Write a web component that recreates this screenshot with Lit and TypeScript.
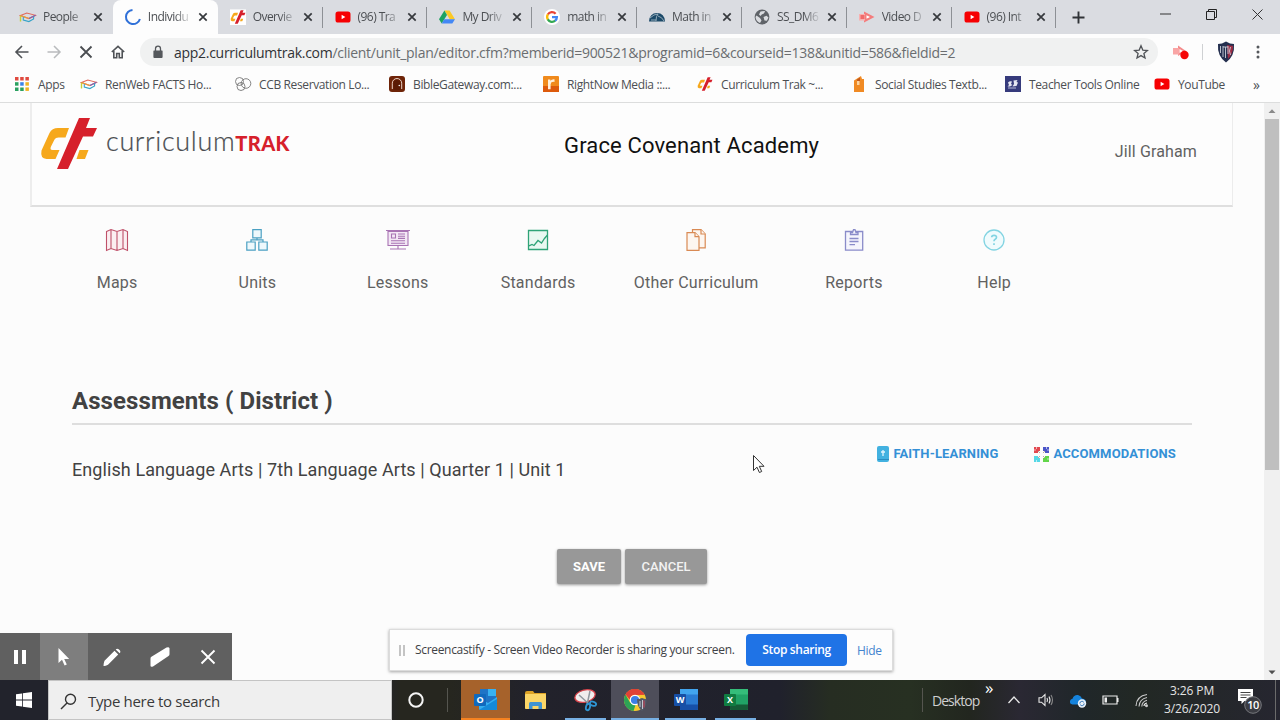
import { LitElement, html, css, svg } from "lit";
import { customElement } from "lit/decorators.js";

const youtube = svg`<svg width="16" height="16" viewBox="0 0 16 16"><rect x="0.5" y="2.5" width="15" height="11" rx="2.6" fill="#f60002"/><path d="M6.6 5.7 10.4 8 6.6 10.3z" fill="#fff"/></svg>`;
const facts = svg`<svg width="18" height="16" viewBox="0 0 18 16" fill="none" stroke-width="1.1"><path d="M1.500 6.600 7.800 4l8.700 2.300-6.600 3.300z" stroke="#e0685a"/><path d="M9.900 9.600 16.500 6.300" stroke="#7a63b8"/><path d="M1.500 6.600 9.900 9.600" stroke="#e9a13a"/><path d="M4.300 8v3l5.600 1.600 4.700-2.600V7.600" stroke="#35a3c8"/><path d="M1.500 7v5.500" stroke="#c7cf3a" stroke-width="1.400"/></svg>`;
const ctMark = svg`<g><path d="M29 10H18q-6 0-8.500 5l-8 17.500q-1.500 8 5 8.500h9l4-9h-7q-3 0-1.500-3.500l3.500-7q1-2 4-2h7z" fill="#f6a81c"/><path d="M36.500 41 39.500 32h9L45 41z" fill="#f6a81c"/><path d="M39 0h11l-4 10h11l-4 8.500H43L28 51H17z" fill="#d6202b"/></g>`;
const ct = svg`<svg width="16" height="16" viewBox="-1 -2 60 55">${ctMark}</svg>`;
const ctTab = svg`<svg width="16" height="16" viewBox="-1 -2 60 55"><rect x="-2" y="-3" width="62" height="60" fill="#fff"/>${ctMark}</svg>`;
const screencast = svg`<svg width="18" height="16" viewBox="0 0 18 16"><path d="M6 2.500 16.500 8 6 13.500z" fill="#f47c7c"/><path d="M8.500 6.200 12 8l-3.500 1.800z" fill="#fff"/><rect x="1" y="5" width="6" height="6.500" fill="#f9b0b0"/><rect x="2.500" y="6" width="4" height="4" fill="#f06a6a"/></svg>`;

const spinner = svg`<svg width="18" height="18" viewBox="0 0 18 18"><path d="M8.500 1.900A7.100 7.100 0 1 0 15.900 11" fill="none" stroke="#2f70d8" stroke-width="2"/></svg>`;
const drive = svg`<svg width="16" height="16" viewBox="0 0 16 16"><path d="M5.400 1.500h5.200L16 10.300h-5.200z" fill="#fbc926"/><path d="M5.400 1.500 8 6 2.700 14.500 0 10.300z" fill="#1ea362"/><path d="M5.300 10.300H16l-2.700 4.200H2.700z" fill="#4387f5"/></svg>`;
const google = svg`<svg width="16" height="16" viewBox="0 0 16 16"><circle cx="8" cy="8" r="8" fill="#fff"/><g fill="none" stroke-width="2.300"><path d="M3.800 5.500A4.900 4.900 0 0 1 11.600 4.700" stroke="#ea4335"/><path d="M3.900 10.600a4.900 4.900 0 0 1 0-5.200" stroke="#fbbc05"/><path d="M11.200 11.700a4.900 4.900 0 0 1-7.400-1.300" stroke="#34a853"/><path d="M8 8.100h4.900q0 2.400-1.800 3.700" stroke="#4285f4"/></g></svg>`;
const dome = svg`<svg width="16" height="16" viewBox="0 0 16 16"><path d="M0 12.500Q.5 4 8 4t8 8.500z" fill="#1c4a69"/><path d="M1 9q4-4 8-4-2 2-2 7M9 7q4 1 6 5M2 11h5" fill="none" stroke="#9fb4c2" stroke-width=".9"/></svg>`;
const globe = svg`<svg width="16" height="16" viewBox="0 0 16 16"><circle cx="8" cy="8" r="7.400" fill="#5f6368"/><path d="M2.500 6.500 6 9l1.500 2.500L6 14q-4-1.500-4.500-6zM6.500 2.500 11 2q-.5 3-3 3.200L6.500 7 5 5.500zM9.500 8l3-1.200 2 1.700-1.600 3.300-2.400-.4z" fill="#dadce0"/></svg>`;

const tabs: { icon: unknown; text: string; active?: boolean }[] = [
  { icon: facts, text: "People" },
  { icon: spinner, text: "Individu", active: true },
  { icon: ctTab, text: "Overvie" },
  { icon: youtube, text: "(96) Tra" },
  { icon: drive, text: "My Driv" },
  { icon: google, text: "math in" },
  { icon: dome, text: "Math in" },
  { icon: globe, text: "SS_DM6" },
  { icon: screencast, text: "Video D" },
  { icon: youtube, text: "(96) Int" },
];

const appsIcon = svg`<svg width="14" height="14" viewBox="0 0 14 14"><g fill="#e04a3f"><path d="M0 0h3.500v3.500H0zM5.200 0h3.500v3.500H5.200z"/><path d="M10.400 0h3.500v3.500h-3.500z"/></g><path d="M0 5.200h3.500v3.500H0z" fill="#2ba160"/><path d="M5.200 5.200h3.500v3.500H5.200z" fill="#3b83e8"/><path d="M10.400 5.200h3.500v3.500h-3.500z" fill="#f0b323"/><path d="M0 10.400h3.500v3.500H0zM5.200 10.400h3.500v3.500H5.200z" fill="#2ba160"/><path d="M10.400 10.400h3.500v3.500h-3.500z" fill="#f0b323"/></svg>`;
const ccb = svg`<svg width="18" height="16" viewBox="0 0 18 16" fill="none" stroke="#777" stroke-width=".9"><circle cx="5.500" cy="5.500" r="4"/><circle cx="7" cy="10.500" r="4"/><circle cx="12" cy="7.500" r="4.800"/></svg>`;
const bible = svg`<svg width="16" height="16" viewBox="0 0 16 16"><rect width="16" height="16" rx="3" fill="#6e2408"/><path d="M3.300 13V7.200a4.700 4.700 0 0 1 9.400 0V13" fill="none" stroke="#f3e3da" stroke-width=".9"/><path d="M4.500 14V7.500a3.500 3.500 0 0 1 7 0V14z" fill="#5a1b05"/><circle cx="10.300" cy="9.500" r=".8" fill="#fff"/></svg>`;
const rightnow = svg`<svg width="16" height="16" viewBox="0 0 16 16"><rect width="16" height="16" rx="1" fill="#f08a1c"/><path d="M0 10h16v6H0z" fill="#dd5a0c"/><path d="M5 3.500h2.300v1.300Q8.600 3 11.500 3.300v2.600q-3.700-.5-3.900 2.300v5H5z" fill="#fff0dc"/></svg>`;
const book = svg`<svg width="12" height="16" viewBox="0 0 12 16"><path d="M1 4.500 8 0l1 3h2v13H1z" fill="#f08a24"/><path d="M4 3.500 7 1.500v3.500H4z" fill="#c25a1e"/><path d="M4 5h2.500v4H4z" fill="#fbd3a0"/></svg>`;
const teacher = svg`<svg width="16" height="16" viewBox="0 0 16 16"><rect width="16" height="16" fill="#363b7c"/><path d="M3 6.500q2-2 4-1L6 8l1.500 1L5 10.500H2.500L4 9zM8.500 4.500l4-.5-1 2 1.500.5-1.500 3.500-4 .5L9 8z" fill="#e6e7f2"/><path d="M3 12h8" stroke="#b9bcd9"/></svg>`;

const bookmarks = [
  { icon: appsIcon, text: "Apps", cls: "b0" },
  { icon: facts, text: "RenWeb FACTS Ho...", cls: "b1" },
  { icon: ccb, text: "CCB Reservation Lo...", cls: "b2" },
  { icon: bible, text: "BibleGateway.com:...", cls: "b3" },
  { icon: rightnow, text: "RightNow Media ::...", cls: "b4" },
  { icon: ct, text: "Curriculum Trak ~...", cls: "b5" },
  { icon: book, text: "Social Studies Textb...", cls: "b6" },
  { icon: teacher, text: "Teacher Tools Online", cls: "b7" },
  { icon: youtube, text: "YouTube", cls: "b8" },
];

const closeX = svg`<svg width="10" height="10" viewBox="0 0 10 10"><path d="M1.300 1.300l7.400 7.400M8.700 1.300 1.300 8.700" stroke="#36393d" stroke-width="1.700"/></svg>`;

const navItems = [
  { text: "Maps", cls: "n0", icon: svg`<svg width="24" height="24" viewBox="0 0 24 24" fill="#fbeef1" stroke="#bf5069" stroke-width="1.100"><path d="M1.500 3.500 6 1.500l6 2 6-2 4.500 2v19l-4.500-2-6 2-6-2-4.500 2zM6 1.500v19M12 3.500v19M18 1.500v19"/></svg>` },
  { text: "Units", cls: "n1", icon: svg`<svg width="24" height="24" viewBox="0 0 24 24" fill="#eef8fc" stroke="#4ba0c2" stroke-width="1.200"><path d="M7.800 1.600h8.400v8.200H7.800zM1.800 14h8.400v8.200H1.800zM13.800 14h8.400v8.200h-8.400z"/><path d="M12 10v2M6 14v-2.200h12V14" fill="none"/></svg>` },
  { text: "Lessons", cls: "n2", icon: svg`<svg width="26" height="24" viewBox="0 0 26 24" fill="none" stroke="#a873b3" stroke-width="1.100"><path d="M3 3.500h20v14H3z" fill="#f3e7f5"/><path d="M1 2.500h24M13 17.500v3M5 21h16M6.500 6h4v4h-4zM13 6h7M13 8.200h7M13 10.400h7M6 12.800h14M6 15.200h14"/></svg>` },
  { text: "Standards", cls: "n3", icon: svg`<svg width="24" height="24" viewBox="0 0 24 24" fill="#e9f8f1" stroke="#2fa377" stroke-width="1.300"><path d="M2.500 2.500h19v19h-19z"/><path d="m3 17.800 3-1.300 2 1 4-5 3.500 2.500 3-4.500 3-3.500" fill="none"/></svg>` },
  { text: "Other Curriculum", cls: "n4", icon: svg`<svg width="24" height="24" viewBox="0 0 24 24" fill="#fdf6f0" stroke="#d98a54" stroke-width="1.200"><path d="M8.500 5V1.700H17l4.200 4.200v14H15"/><path d="M17 1.700V6h4.200"/><path d="M3 4.700h8l4 4v13.600H3z"/><path d="M11 4.700v4h4"/></svg>` },
  { text: "Reports", cls: "n5", icon: svg`<svg width="24" height="24" viewBox="0 0 24 24" fill="#f5f5fc" stroke="#8a8cc9" stroke-width="1.300"><path d="M3.500 3.500h17.200v18.700H3.500z"/><path d="M8.500 6.500V4.500h2l1-2.800h1.500l1 2.800h2v2zM7.500 10.500h9M7.500 13.500h9M7.500 16.700h5.500"/></svg>` },
  { text: "Help", cls: "n6", icon: svg`<svg width="24" height="24" viewBox="0 0 24 24" fill="none" stroke="#83d4e2" stroke-width="1.300"><circle cx="12" cy="12" r="10" fill="#f0fbfd"/><path d="M9.700 9.300q0-2 2.400-2t2.400 2q0 1.300-1.300 2t-1.200 2" stroke-width="1.700"/><path d="M12 15.300v1.700" stroke-width="1.700"/></svg>` },
];

@customElement("browser-chrome")
class BrowserChrome extends LitElement {
  static styles = css`
    :host { display: block; height: 103px; flex: none; background: #fdfdfd; font-family: "Open Sans", "Noto Sans", sans-serif; color: #4c4f53; }
    .tabs { height: 34px; background: #dadce1; display: flex; padding-left: 8px; box-sizing: border-box; }
    .tab { width: 104.85px; flex: none; display: flex; align-items: center; box-sizing: border-box; padding: 0 9px 0 11px; border-right: 1px solid transparent; background-clip: padding-box; }
    .tab.sep { border-image: linear-gradient(transparent 8px, #8d9095 8px, #8d9095 27px, transparent 27px) 1; border-width: 0 1px 0 0; border-style: solid; }
    .tab.active { background: #fdfdfd; border-radius: 8px 8px 0 0; border: 0; padding-right: 10px; }
    .ico { width: 18px; height: 18px; display: flex; align-items: center; justify-content: center; flex: none; }
    .label { width: 46px; margin: 0 -4px 0 6px; flex: none; white-space: nowrap; font-size: 12px; letter-spacing: -0.55px; line-height: 20px; -webkit-mask-image: linear-gradient(90deg, #000 58%, transparent 96%); }
    .close { margin-left: auto; display: flex; }
    .tabs-end { flex: 1; display: flex; align-items: center; }
    .plus { margin-left: 16px; display: flex; }
    .win { margin-left: auto; display: flex; gap: 35px; margin-right: 17px; margin-top: -5px; }
    .toolbar { height: 36px; display: flex; align-items: center; }
    .tools { display: flex; gap: 16px; padding-left: 14px; width: 126px; flex: none; }
    .omni { width: 1018px; height: 28px; border-radius: 14px; background: #f0f1f1; display: flex; align-items: center; padding: 0 9px 0 12px; box-sizing: border-box; }
    .url { margin-left: 10px; font-size: 14px; letter-spacing: -0.28px; color: #6a6d70; flex: 1; white-space: nowrap; }
    .url b { font-weight: 400; color: #303336; }
    .ext { display: flex; align-items: center; padding-left: 14px; }
    .vline { width: 1px; height: 16px; background: #cfd1d3; margin: 0 14px 0 12px; }
    .dots { margin-left: 15px; display: flex; }
    .marks { height: 33px; box-sizing: border-box; border-bottom: 1px solid #dcdddd; display: flex; align-items: center; padding: 0 0 4px 13px; font-size: 12px; letter-spacing: -0.37px; }
    .mark { display: flex; align-items: center; white-space: nowrap; flex: none; gap: 7px; }
    .b0 { width: 67px; } .b1 { width: 154px; } .b2 { width: 154px; } .b3 { width: 154px; } .b4 { width: 154px; } .b5 { width: 154px; } .b6 { width: 154px; } .b7 { width: 149px; } .b8 { width: 92px; }
    .more { margin-left: 8px; font-size: 14px; }
  `;
  render() {
    return html`
      <div class="tabs">
        ${tabs.map((t, i) => html`<div class="tab ${t.active ? "active" : ""} ${i > 1 ? "sep" : ""}">
          <span class="ico">${t.icon}</span><span class="label">${t.text}</span><span class="close">${closeX}</span></div>`)}
        <div class="tabs-end">
          <span class="plus"><svg width="13" height="13" viewBox="0 0 13 13"><path d="M6.500.5v12M.5 6.500h12" stroke="#303337" stroke-width="1.900"/></svg></span>
          <span class="win">
            <svg width="11" height="11" viewBox="0 0 11 11"><path d="M0 5h11" stroke="#333"/></svg>
            <svg width="11" height="11" viewBox="0 0 11 11" fill="none" stroke="#222"><path d="M.5 2.500h8v8h-8zM2.500 2.500v-2h8v8h-2"/></svg>
            <svg width="11" height="11" viewBox="0 0 11 11" stroke="#333"><path d="m.5.5 10 10M10.500.5l-10 10"/></svg>
          </span>
        </div>
      </div>
      <div class="toolbar">
        <div class="tools">
          <svg width="16" height="16" viewBox="0 0 16 16" fill="none" stroke="#505357" stroke-width="1.600"><path d="M14.500 8H2.500M8 2 2 8l6 6"/></svg>
          <svg width="16" height="16" viewBox="0 0 16 16" fill="none" stroke="#b9bbbd" stroke-width="1.500"><path d="M1.500 8h12M8 2l6 6-6 6"/></svg>
          <svg width="16" height="16" viewBox="0 0 16 16" fill="none" stroke="#4a4d51" stroke-width="1.800"><path d="m2.500 2.500 11 11M13.500 2.500l-11 11"/></svg>
          <svg width="16" height="16" viewBox="0 0 16 16" fill="none" stroke="#505357" stroke-width="1.600"><path d="M1.800 8 8 2.300 14.200 8M3.800 7v6.700h2.900V9.500h2.600v4.200h2.900V7"/></svg>
        </div>
        <div class="omni">
          <svg width="12" height="14" viewBox="0 0 12 14"><path d="M2 5.500h8q.6 0 .6.600v6q0 .9-.9.900H2.300q-.9 0-.9-.9v-6q0-.6.600-.6z" fill="#55585c"/><path d="M3.500 6V3.700a2.500 2.500 0 0 1 5 0V6" fill="none" stroke="#55585c" stroke-width="1.300"/></svg>
          <span class="url"><b>app2.curriculumtrak.com</b>/client/unit_plan/editor.cfm?memberid=900521&amp;programid=6&amp;courseid=138&amp;unitid=586&amp;fieldid=2</span>
          <svg width="16" height="16" viewBox="0 0 16 16" fill="none" stroke="#505357" stroke-width="1.300"><path d="m8 1.800 1.800 4.300 4.600.4-3.500 3 1.100 4.500L8 11.600 4 14l1.100-4.500-3.500-3 4.600-.4z"/></svg>
        </div>
        <div class="ext">
          <svg width="18" height="18" viewBox="0 0 18 18"><path d="M6 2.500 14 8l-8 5z" fill="#f48a8a"/><path d="M7.500 6 11 8 7.500 10z" fill="#fff"/><rect x="1" y="5" width="6" height="6.500" fill="#f9a5a5"/><circle cx="12.500" cy="12" r="4.200" fill="#f50808"/></svg>
          <span class="vline"></span>
          <svg width="18" height="22" viewBox="0 0 18 22"><path d="M1 3q4 0 8-2.500Q13 3 17 3q1 12-8 18.500Q0 15 1 3z" fill="#25304f"/><path d="M10 4q3 1 6 .8Q16.300 13 11 18z" fill="#9c2c44"/><path d="M3.500 5v7M6 5v11M6 6h5M8.500 6v11M11 5v8M13.500 6q-2 4 0 8" stroke="#c9ced8" stroke-width=".9" fill="none"/></svg>
          <span class="dots"><svg width="16" height="16" viewBox="0 0 16 16" fill="#55585c"><circle cx="8" cy="3" r="1.500"/><circle cx="8" cy="8" r="1.500"/><circle cx="8" cy="13" r="1.500"/></svg></span>
        </div>
      </div>
      <div class="marks">
        ${bookmarks.map((b) => html`<div class="mark ${b.cls}"><span class="ico">${b.icon}</span>${b.text}</div>`)}
        <span class="more">»</span>
      </div>`;
  }
}

@customElement("trak-page")
class TrakPage extends LitElement {
  static styles = css`
    :host { display: flex; flex: 1; min-height: 0; background: #fcfcfc; font-family: Roboto, sans-serif; color: #616161; }
    .page { flex: 1; padding: 0 31px 0 30px; box-sizing: border-box; }
    .card { height: 104px; box-sizing: border-box; border: 1px solid #ececec; border-top: 0; border-bottom: 2px solid #dfdfdf; border-left: 2px solid #ededed; display: flex; background: #fdfdfd; padding: 0 35px 0 8px; }
    .logo { display: flex; padding-top: 15px; width: 524px; }
    .word { margin: 6px 0 0 8px; font-family: Lato, sans-serif; white-space: nowrap; display: flex; align-items: baseline; line-height: 34px; }
    .thin { font-weight: 300; font-size: 27px; color: #4a4d51; letter-spacing: 0.65px; -webkit-text-stroke: 0.2px #4a4d51; }
    .bold { font-weight: 900; font-size: 20px; color: #d6202b; letter-spacing: 0.4px; }
    .school { font-size: 22px; color: #111; letter-spacing: 0.14px; padding-top: 30px; line-height: 26px; }
    .user { font-size: 16px; letter-spacing: 0.13px; margin-left: auto; padding-top: 39px; line-height: 20px; }
    .nav { display: flex; margin: 21px 0 0 17px; height: 70px; }
    .item { display: flex; flex-direction: column; align-items: center; gap: 21px; font-size: 16px; letter-spacing: 0.25px; line-height: 20px; white-space: nowrap; }
    .n0, .n1, .n2, .n3 { width: 140.300px; } .n4 { width: 176px; } .n5 { width: 139.500px; } .n6 { width: 141px; }
    .body { margin: 88px 41px 0 42px; }
    h1 { font-size: 24px; line-height: 30px; font-weight: 700; color: #424242; margin: 0; padding-bottom: 7px; border-bottom: 2px solid #dedede; letter-spacing: 0.08px; }
    .row { display: flex; justify-content: space-between; align-items: flex-start; }
    .crumbs { font-size: 18px; color: #424242; padding-top: 34px; line-height: 22px; letter-spacing: 0.09px; }
    .links { display: flex; gap: 35px; padding: 20px 16px 0 0; font-size: 13px; font-weight: 700; color: #3490d6; line-height: 18px; letter-spacing: 0.14px; }
    .links span { display: flex; align-items: center; gap: 3px; }
    .actions { display: flex; justify-content: center; gap: 4px; margin-top: 68px; }
    .btn { height: 35px; line-height: 35px; border-radius: 2px; background: #989898; color: #fff; font-size: 13px; text-align: center; box-shadow: 0 1px 3px rgba(0,0,0,.4); }
    .save { width: 64px; font-weight: 700; } .cancel { width: 82px; color: #f2f2f2; font-weight: 500; }
    .scroll { width: 16px; background: #f0f0f0; display: flex; flex-direction: column; align-items: center; }
    .scroll svg { flex: none; }
    .thumb { width: 14px; height: 351px; background: #bfbfbf; }
    .fill { flex: 1; }
  `;
  render() {
    return html`
      <div class="page">
        <div class="card">
          <div class="logo">
            <svg width="58" height="52" viewBox="0 0 58 52">${ctMark}</svg>
            <div class="word"><span class="thin">curriculum</span><span class="bold">TRAK</span></div>
          </div>
          <div class="school">Grace Covenant Academy</div>
          <div class="user">Jill Graham</div>
        </div>
        <div class="nav">${navItems.map((n) => html`<div class="item ${n.cls}">${n.icon}<span>${n.text}</span></div>`)}</div>
        <div class="body">
          <h1>Assessments ( District )</h1>
          <div class="row">
            <div class="crumbs">English Language Arts | 7th Language Arts | Quarter 1 | Unit 1</div>
            <div class="links">
              <span><svg width="14" height="16" viewBox="0 0 14 16"><rect x="1" width="12" height="16" rx="2" fill="#42b1e0"/><path d="M2 13.500h11" stroke="#2a8cc0"/><path d="M7 4v6M5 6h4" stroke="#dff4fd" stroke-width="1.300"/></svg>FAITH-LEARNING</span>
              <span><svg width="17" height="17" viewBox="0 0 17 17"><path d="M1 1h6v4H5v2H1z" fill="#e2474f"/><path d="M10 1h6v6h-4V5h-2z" fill="#4a55c8"/><path d="M1 10h4v2h2v4H1z" fill="#55d8e6"/><path d="M12 10h4v6h-6v-4h2z" fill="#62d64a"/><path d="m5 5 2 2M12 5l-2 2M5 12l2-2M12 12l-2-2" stroke="#b9a9a0" stroke-width="1"/><path d="M3.500 1v2M1 4h2M13.500 1v2M14 4h2M3.500 14v2M14 13h2" stroke="#fff" stroke-width=".6"/></svg>ACCOMMODATIONS</span>
            </div>
          </div>
          <div class="actions"><div class="btn save">SAVE</div><div class="btn cancel">CANCEL</div></div>
        </div>
      </div>
      <div class="scroll">
        <svg width="16" height="16" viewBox="0 0 16 16"><path d="M4.500 10 8 6.300l3.500 3.700z" fill="#8a8a8a"/></svg>
        <div class="thumb"></div><div class="fill"></div>
        <svg width="16" height="16" viewBox="0 0 16 16"><path d="M4.500 6.500h7L8 10.200z" fill="#505050"/></svg>
      </div>`;
  }
}

const office = (letter: string, dark: string, mid: string, light: string, plate: string) => svg`
  <svg width="24" height="24" viewBox="0 0 24 24"><rect x="6" y="1" width="18" height="21" rx="1" fill="${mid}"/><path d="M6 1h18v5.500H6z" fill="${light}"/><path d="M6 16.500h18V21q0 1-1 1H7q-1 0-1-1z" fill="${dark}"/><rect y="6" width="12" height="12" rx="1" fill="${plate}"/><text x="6" y="15.300" text-anchor="middle" font-family="Open Sans" font-weight="700" font-size="9" fill="#fff">${letter}</text></svg>`;

@customElement("task-bar")
class TaskBar extends LitElement {
  static styles = css`
    :host { display: flex; flex: none; height: 40px; background: linear-gradient(90deg, #22232c 0 380px, #26261f 400px, #26261f 450px, #22222b 530px, #20212c 780px, #262d22 830px, #273022 910px, #22261f 970px, #2a2833 1020px, #20272a 1080px, #222824 1140px, #262630 1280px); font-family: "Open Sans", "Noto Sans", sans-serif; color: #e4e4e4; }
    .start { width: 48px; display: grid; place-items: center; }
    .search { width: 344px; box-sizing: border-box; background: #efefef; border: 1px solid #c4c4c4; display: flex; align-items: center; padding-left: 11px; color: #3a3a3a; font-size: 15px; letter-spacing: -0.33px; gap: 11px; padding-top: 2px; }
    .cell { height: 40px; display: grid; place-items: center; box-sizing: border-box; }
    .cortana { width: 48px; margin-right: 7px; } .rule { width: 1px; height: 24px; background: #55554f; align-self: center; }
    .outlook { width: 49px; background: #a6622b; border-bottom: 2px solid #f58220; margin-left: 13px; padding-top: 2px; }
    .files { width: 52px; }
    .open { border-bottom: 2px solid #77b0e4; padding-top: 2px; }
    .snip { width: 41px; margin-left: 3px; } .chrome { width: 48px; margin-left: 5px; background: #4e4e5a; } .app { width: 41px; margin-left: 6px; } .app + .app { margin-left: 9px; }
    .tray { margin-left: auto; display: flex; align-items: center; }
    .desk { font-size: 14px; letter-spacing: -0.95px; margin-left: 9px; width: 53px; color: #cfcfcf; white-space: nowrap; font-size: 14px; }
    .chev { font-size: 17px; color: #fff; width: 14px; margin-top: -24px; line-height: 20px; }
    .icons { display: flex; align-items: center; gap: 12px; margin-left: 5px; }
    .clock { font-size: 12px; letter-spacing: -0.1px; line-height: 18px; text-align: center; width: 70px; margin-left: 5px; white-space: nowrap; }
    .note { margin-left: 9px; width: 39px; display: flex; }
    .edge { width: 1px; height: 40px; background: #6b6b6b; margin-right: 4px; }
  `;
  render() {
    return html`
      <div class="start"><svg width="16" height="16" viewBox="0 0 16 16" fill="#fff"><path d="M0 2.300 6 1.400v6.200H0zM6.800 1.300 16 0v7.600H6.800zM0 8.400h6v6.200l-6-.9zM6.800 8.400H16V16l-9.200-1.300z"/></svg></div>
      <div class="search"><svg width="17" height="17" viewBox="0 0 17 17" fill="none" stroke="#333" stroke-width="1.400"><circle cx="10.500" cy="6.300" r="5"/><path d="M7 10 1 16"/></svg>Type here to search</div>
      <div class="cell cortana"><svg width="18" height="18" viewBox="0 0 18 18"><circle cx="9" cy="9" r="6.700" fill="none" stroke="#f4f4f4" stroke-width="2"/></svg></div>
      <div class="rule"></div>
      <div class="cell outlook"><svg width="25" height="24" viewBox="0 0 25 24"><rect x="7" y="1" width="16" height="14" fill="#1f74c6"/><path d="M15 1h8v7h-8z" fill="#38b2f2"/><path d="M6 10l9 5 9-6v12q0 1-1 1H7q-1 0-1-1z" fill="#35aef0"/><path d="m6 22 18-11v10q0 1-1 1z" fill="#1589d8"/><rect x="1" y="6" width="12" height="12" rx="1" fill="#1069bd"/><text x="7" y="15.200" text-anchor="middle" font-family="Open Sans" font-weight="700" font-size="9" fill="#fff">O</text></svg></div>
      <div class="cell files"><svg width="22" height="20" viewBox="0 0 22 20"><path d="M0 3q0-2 2-2h6l1.500 2H21v4H0z" fill="#dda326"/><rect y="4" width="21" height="15" rx=".8" fill="#fbd667"/><path d="M4 19v-5.500q0-1.500 1.500-1.500h10q1.500 0 1.500 1.500V19h-3.500v-3h-6v3z" fill="#3f93d2"/></svg></div>
      <div class="cell snip open"><svg width="24" height="24" viewBox="0 0 24 24"><ellipse cx="11" cy="8" rx="10.300" ry="6" transform="rotate(-14 11 8)" fill="#f1eeee" stroke="#d8444c" stroke-width="1.300"/><path d="m5 7 10 9M16 3l-3 14" stroke="#90989f" stroke-width="1.500"/><g fill="none" stroke="#2f94d2" stroke-width="1.800"><ellipse cx="14" cy="19" rx="2" ry="3.300" transform="rotate(15 14 19)"/><ellipse cx="19" cy="15.700" rx="3.200" ry="2" transform="rotate(18 19 15.700)"/></g></svg></div>
      <div class="cell chrome open"><svg width="26" height="24" viewBox="0 0 26 24"><circle cx="13" cy="12" r="11" fill="#f7c92f"/><path d="M3.500 6.500A11 11 0 0 1 22.500 6.500L13 7z" fill="#e04236"/><path d="M3.500 6.500 8 14.500l6 1L11.500 23A11 11 0 0 1 3.500 6.500z" fill="#2da355"/><path d="M3.500 6.500Q7 .8 13 1t9.500 5.800H13q-4.500.2-5.300 5z" fill="#e04236"/><circle cx="13" cy="12" r="5.300" fill="#fff"/><circle cx="13" cy="12" r="4.100" fill="#3b7fe8"/><path d="M15 11q3 0 5-1 2 1 4.500 1 0 8-4.500 12-5-4-5-12z" fill="#545a69"/><path d="M18 13v6M20.500 12v9" stroke="#c2c6ce"/><path d="M22 12.500v7" stroke="#a8485a" stroke-width="1.500"/></svg></div>
      <div class="cell app open">${office("W", "#1650a8", "#2a7bd2", "#42a5ee", "#174fa5")}</div>
      <div class="cell app open">${office("X", "#155c37", "#21a366", "#35bd7a", "#107c41")}</div>
      <div class="tray">
        <span class="rule"></span><span class="desk">Desktop</span><span class="chev">»</span>
        <span class="icons">
          <svg width="20" height="20" viewBox="0 0 20 20" fill="none" stroke="#e8e8e8" stroke-width="1.300"><path d="m4.500 13 5.500-6 5.500 6"/></svg>
          <svg width="20" height="20" viewBox="0 0 20 20" fill="none" stroke="#e8e8e8" stroke-width="1.100"><path d="M3 7.800h2.500L9 4.500v11l-3.500-3.300H3z"/><path d="M11 8q1 2 0 4M13 6.500q2 3.500 0 7" /><path d="M15 5q3 5 0 10" stroke="#888"/></svg>
          <svg width="20" height="20" viewBox="0 0 20 20"><path d="M4.500 14.500q-3-.5-2.500-3.500.5-2 2.500-2.300Q6 4.500 10 5q3 .5 4 3.500 4 .5 4 4l-4 2z" fill="#1583dc"/><circle cx="14" cy="13.500" r="4.200" fill="#e9f1f8"/><path d="M11.800 13.500a2.200 2.200 0 0 1 4-1.200M16.200 13.500a2.200 2.200 0 0 1-4 1.200" stroke="#2a6eb5" fill="none"/></svg>
          <svg width="20" height="20" viewBox="0 0 20 20"><path d="M3 6h14v8H3z" fill="none" stroke="#eaeaea" stroke-width="1.200"/><path d="M4.500 7.500H7v5H4.500zM17 8h1.500v4H17z" fill="#eee"/></svg>
          <svg width="20" height="20" viewBox="0 0 20 20" fill="none" stroke="#c9c9c9" stroke-width="1.100"><path d="M4 16Q4.500 6 15 4.500M7 16.500q.5-7.500 8-9M9.800 16.500q.2-5 5.200-6.300"/><path d="M12 16q0-2.500 3-3" stroke="#eee"/><circle cx="14.500" cy="15.800" r=".9" fill="#eee"/></svg>
        </span>
        <span class="clock">3:26 PM<br />3/26/2020</span>
        <span class="note"><svg width="28" height="28" viewBox="0 0 28 28"><path d="M2 3h15v12H8.500L5.500 18v-3H2z" fill="#fff"/><path d="M4.500 6.500h10M4.500 9h10M4.500 11.500h6" stroke="#444"/><circle cx="17" cy="19" r="8.300" fill="#3b3c42" stroke="#77787d"/><text x="17" y="23" text-anchor="middle" font-family="Open Sans" font-weight="600" font-size="11" letter-spacing="-.5" fill="#fff">10</text></svg></span>
        <span class="edge"></span>
      </div>`;
  }
}

@customElement("app-root")
class AppRoot extends LitElement {
  static styles = css`
    :host { display: flex; flex-direction: column; width: 1280px; height: 720px; position: relative; overflow: hidden; }
    .recorder { position: absolute; left: 0; top: 633px; height: 47px; width: 232px; display: flex; background: #606060; }
    .recorder span { width: 48px; display: grid; place-items: center; }
    .recorder .first { width: 40px; } .recorder .on { background: #7e7e7e; }
    .share { position: absolute; left: 389px; top: 629px; width: 504px; height: 42px; box-sizing: border-box; background: #fdfdfd; border: 1px solid #dcdcdc; box-shadow: 0 1px 3px rgba(0,0,0,.35); display: flex; align-items: center; font-family: "Open Sans", "Noto Sans", sans-serif; font-size: 12px; color: #3f4246; white-space: nowrap; }
    .grip { width: 2px; height: 11px; border: solid #c4c4c4; border-width: 0 2px; margin-left: 9px; }
    .msg { margin-left: 10px; width: 331px; letter-spacing: -0.32px; line-height: 18px; padding-bottom: 1px; }
    .stop { width: 101px; height: 32px; line-height: 31px; border-radius: 4px; background: #1f73e6; color: #fff; font-weight: 600; text-align: center; letter-spacing: -0.32px; }
    .hide { margin-left: 10px; color: #4384cf; letter-spacing: -0.3px; }
    .pointer { position: absolute; left: 752px; top: 454px; }
  `;
  render() {
    return html`
      <browser-chrome></browser-chrome>
      <trak-page></trak-page>
      <task-bar></task-bar>
      <div class="recorder">
        <span class="first"><svg width="14" height="16" viewBox="0 0 14 16" fill="#fff"><path d="M1 1h4v14H1zM9 1h4v14H9z"/></svg></span>
        <span class="on"><svg width="14" height="20" viewBox="0 0 14 20"><path d="M1.500 1v15l3.500-3.200 2.600 5.800 2.200-1-2.600-5.700h5z" fill="#fff"/></svg></span>
        <span><svg width="20" height="20" viewBox="0 0 20 20" fill="#fff"><path d="m12.500 3.800 3.700 3.700L6 17.700q-4.500 2.300-4.500.8.300-3 1-4.700zM13.700 2.500q1.300-1.500 3-.3l1.300 1.400q1 1.500-.3 2.700z"/></svg></span>
        <span><svg width="22" height="22" viewBox="0 0 22 22" fill="#fff"><path d="M2 11 17.500 1.600q2.500-1.100 3 .7v6q0 1-1 1.700L4 20.500q-2.500 1-2.500-.8v-7q0-1.200.5-1.700z"/></svg></span>
        <span><svg width="16" height="16" viewBox="0 0 16 16"><path d="m1.500 1.500 13 13M14.500 1.500l-13 13" stroke="#fff" stroke-width="1.900"/></svg></span>
      </div>
      <div class="share">
        <span class="grip"></span>
        <span class="msg">Screencastify - Screen Video Recorder is sharing your screen.</span>
        <span class="stop">Stop sharing</span><span class="hide">Hide</span>
      </div>
      <svg class="pointer" width="14" height="20" viewBox="0 0 14 20"><path d="M1.500 1.500v15l3.500-3.300 2.400 5.300 2.300-1-2.400-5.200h4.700z" fill="#fff" stroke="#333"/></svg>`;
  }
}
